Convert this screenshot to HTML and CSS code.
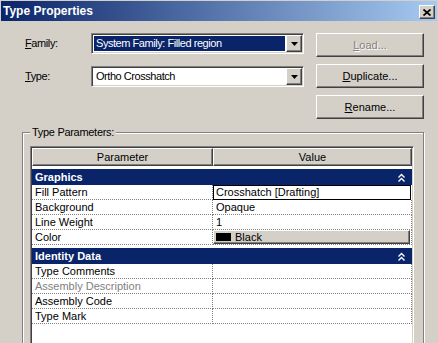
FILE: index.html
```html
<!DOCTYPE html>
<html lang="en">
<head>
    <meta charset="UTF-8">
    <title>Type Properties</title>
    <link rel="stylesheet" href="styles.css">
</head>
<body>
    <div class="titlebar">
        <span class="title">Type Properties</span>
        <span class="close raised">
            <svg width="8" height="7" viewBox="0 0 8 7"><path d="M0.5 0.5 L7.5 6.5 M7.5 0.5 L0.5 6.5" stroke="#000" stroke-width="1.7" fill="none"/></svg>
        </span>
    </div>

    <!-- Family / Type pickers -->
    <div class="form">
        <label class="label"><u>F</u>amily:</label>
        <div class="combo">
            <span class="combo-text selected">System Family: Filled region</span>
            <span class="drop raised"><svg width="7" height="4" viewBox="0 0 7 4"><polygon points="0,0 7,0 3.5,4" fill="#000"/></svg></span>
        </div>
        <button class="btn raised disabled"><u>L</u>oad...</button>

        <label class="label second"><u>T</u>ype:</label>
        <div class="combo second">
            <span class="combo-text">Ortho Crosshatch</span>
            <span class="drop raised"><svg width="7" height="4" viewBox="0 0 7 4"><polygon points="0,0 7,0 3.5,4" fill="#000"/></svg></span>
        </div>
        <button class="btn raised"><u>D</u>uplicate...</button>

        <button class="btn raised rename"><u>R</u>ename...</button>
    </div>

    <!-- Parameters table -->
    <fieldset class="group">
        <legend>Type Parameters:</legend>
        <div class="grid">
            <div class="head">
                <div class="head-cell raised">Parameter</div>
                <div class="head-cell raised">Value</div>
            </div>

            <div class="cat">
                <span>Graphics</span>
                <svg width="7" height="9" viewBox="0 0 7 9"><path d="M0.5 4.5 L3.5 1.5 L6.5 4.5 M0.5 8.5 L3.5 5.5 L6.5 8.5" stroke="#fff" stroke-width="1.4" fill="none"/></svg>
            </div>
            <div class="row">
                <div class="cell">Fill Pattern</div>
                <div class="cell edit">Crosshatch [Drafting]</div>
            </div>
            <div class="row">
                <div class="cell">Background</div>
                <div class="cell">Opaque</div>
            </div>
            <div class="row">
                <div class="cell">Line Weight</div>
                <div class="cell">1</div>
            </div>
            <div class="row">
                <div class="cell">Color</div>
                <div class="cell color-cell">
                    <div class="color-btn raised"><span class="swatch"></span>Black</div>
                </div>
            </div>

            <div class="cat">
                <span>Identity Data</span>
                <svg width="7" height="9" viewBox="0 0 7 9"><path d="M0.5 4.5 L3.5 1.5 L6.5 4.5 M0.5 8.5 L3.5 5.5 L6.5 8.5" stroke="#fff" stroke-width="1.4" fill="none"/></svg>
            </div>
            <div class="row">
                <div class="cell">Type Comments</div>
                <div class="cell"></div>
            </div>
            <div class="row">
                <div class="cell muted">Assembly Description</div>
                <div class="cell"></div>
            </div>
            <div class="row">
                <div class="cell">Assembly Code</div>
                <div class="cell"></div>
            </div>
            <div class="row">
                <div class="cell">Type Mark</div>
                <div class="cell"></div>
            </div>
        </div>
    </fieldset>
</body>
</html>
```

FILE: styles.css
```css
body {
    font-family: "Liberation Sans", Arial, sans-serif;
    font-size: 11px;
    margin: 0;
    width: 438px;
    height: 343px;
    overflow: hidden;
    background-color: #d4d0c8;
    color: #000;
}
.raised {
    box-sizing: border-box;
    background-color: #d4d0c8;
    border: 1px solid;
    border-color: #fff #404040 #404040 #fff;
    box-shadow: inset -1px -1px #808080;
}
.titlebar {
    margin: 1px 1px 0 1px;
    height: 20px;
    display: flex;
    align-items: center;
    justify-content: space-between;
    padding-left: 2px;
    background: linear-gradient(to right, #0a246a, #a6caf0);
}
.title {
    color: white;
    font-weight: bold;
    font-size: 12px;
}
.close {
    width: 16px;
    height: 14px;
    margin: 2px 2px 0 0;
    display: flex;
    align-items: center;
    justify-content: center;
}
.form {
    display: grid;
    grid-template-columns: 54px 213px 108px;
    grid-auto-rows: 24px;
    column-gap: 12px;
    row-gap: 7px;
    margin-top: 12px;
    padding-left: 25px;
}
.label {
    line-height: 21px;
    letter-spacing: -0.4px;
}
.label.second,
.combo.second {
    margin-top: 2px;
}
.combo {
    box-sizing: border-box;
    height: 21px;
    display: flex;
    padding: 1px;
    background: white;
    border: 1px solid;
    border-color: #808080 #fff #fff #808080;
    box-shadow: inset 1px 1px #404040, inset -1px -1px #d4d0c8;
}
.combo-text {
    flex: 1;
    margin: 1px;
    padding-left: 2px;
    line-height: 15px;
    letter-spacing: -0.45px;
    white-space: nowrap;
    overflow: hidden;
}
.combo-text.selected {
    background-color: #0a246a;
    color: white;
}
.drop {
    width: 16px;
    display: flex;
    align-items: center;
    justify-content: center;
}
.btn {
    font-family: inherit;
    font-size: 11px;
    padding: 0;
    color: #000;
}
.btn.disabled {
    color: #808080;
    text-shadow: 1px 1px #fff;
}
.rename {
    grid-column: 3;
}
.group {
    box-sizing: border-box;
    width: 402px;
    height: 240px;
    margin: 6px 0 0 22px;
    padding: 0 9px 0 7px;
    border: 1px solid #808080;
    box-shadow: inset 1px 1px #fff, 1px 1px #fff;
}
.group legend {
    padding: 0 2px;
    margin: 0;
    line-height: 14px;
    letter-spacing: -0.3px;
    background-color: #d4d0c8;
}
.grid {
    box-sizing: border-box;
    width: 384px;
    height: 220px;
    margin-top: 7px;
    padding: 1px;
    background: white;
    border: 1px solid;
    border-color: #808080 #fff #fff #808080;
    box-shadow: inset 1px 1px #404040, inset -1px -1px #d4d0c8;
}
.head,
.row {
    display: grid;
    grid-template-columns: 181px 199px;
}
.head-cell {
    height: 18px;
    line-height: 16px;
    text-align: center;
}
.cat {
    margin-top: 3px;
    height: 16px;
    display: flex;
    align-items: center;
    justify-content: space-between;
    padding: 0 7px 0 3px;
    background-color: #0a246a;
    color: white;
    font-weight: bold;
}
.cell {
    box-sizing: border-box;
    height: 15px;
    line-height: 14px;
    padding-left: 3px;
    border-right: 1px dotted #808080;
    border-bottom: 1px dotted #808080;
    white-space: nowrap;
}
.cell.edit {
    border: 1px solid #000;
    padding-left: 2px;
    line-height: 13px;
    margin-right: 1px;
}
.cell.muted {
    color: #808080;
}
.color-cell {
    padding: 0 1px 1px 0;
}
.color-btn {
    height: 14px;
    line-height: 12px;
    display: flex;
    align-items: center;
    padding-left: 2px;
}
.swatch {
    width: 15px;
    height: 8px;
    margin-right: 4px;
    background-color: #000;
}
```
